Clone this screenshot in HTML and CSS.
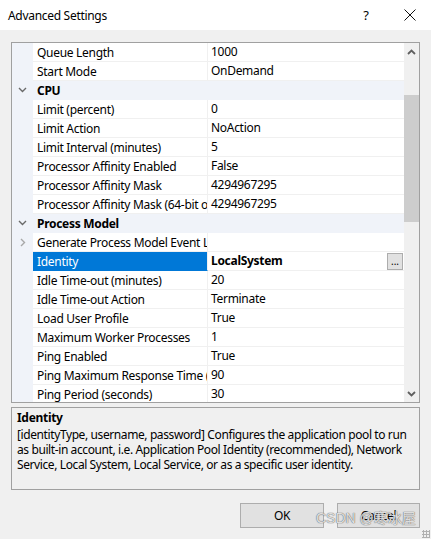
FILE: index.html
```html
<!DOCTYPE html>
<html>
<head>
<meta charset="utf-8">
<link rel="stylesheet" href="styles.css">
</head>
<body>
<div class="dialog">
  <div class="titlebar">
    <span class="title">Advanced Settings</span>
    <span class="help">?</span>
    <span class="close"><svg width="12" height="12" viewBox="0 0 12 12"><path d="M0.5 0.5 L11.5 11.5 M11.5 0.5 L0.5 11.5" stroke="#111" stroke-width="1" fill="none"/></svg></span>
  </div>
  <div class="body">
    <div class="grid">
      <div class="list">
        <div class="row"><div class="gutter"></div><div class="name">Queue Length</div><div class="value">1000</div></div>
        <div class="row"><div class="gutter"></div><div class="name">Start Mode</div><div class="value">OnDemand</div></div>
        <div class="row cat"><div class="gutter"><svg width="9" height="6" viewBox="0 0 9 6"><path d="M1 1 L4.5 4.5 L8 1" stroke="#6a6a6a" stroke-width="1.4" fill="none"/></svg></div><div class="catname">CPU</div></div>
        <div class="row"><div class="gutter"></div><div class="name">Limit (percent)</div><div class="value">0</div></div>
        <div class="row"><div class="gutter"></div><div class="name">Limit Action</div><div class="value">NoAction</div></div>
        <div class="row"><div class="gutter"></div><div class="name">Limit Interval (minutes)</div><div class="value">5</div></div>
        <div class="row"><div class="gutter"></div><div class="name">Processor Affinity Enabled</div><div class="value">False</div></div>
        <div class="row"><div class="gutter"></div><div class="name">Processor Affinity Mask</div><div class="value">4294967295</div></div>
        <div class="row"><div class="gutter"></div><div class="name">Processor Affinity Mask (64-bit option)</div><div class="value">4294967295</div></div>
        <div class="row cat"><div class="gutter"><svg width="9" height="6" viewBox="0 0 9 6"><path d="M1 1 L4.5 4.5 L8 1" stroke="#6a6a6a" stroke-width="1.4" fill="none"/></svg></div><div class="catname">Process Model</div></div>
        <div class="row"><div class="gutter"><svg width="6" height="9" viewBox="0 0 6 9"><path d="M1 1 L4.5 4.5 L1 8" stroke="#a8a8a8" stroke-width="1.4" fill="none"/></svg></div><div class="name">Generate Process Model Event Log Entry</div><div class="value"></div></div>
        <div class="row selected"><div class="gutter"></div><div class="name">Identity</div><div class="value"><b>LocalSystem</b><span class="dots">...</span></div></div>
        <div class="row"><div class="gutter"></div><div class="name">Idle Time-out (minutes)</div><div class="value">20</div></div>
        <div class="row"><div class="gutter"></div><div class="name">Idle Time-out Action</div><div class="value">Terminate</div></div>
        <div class="row"><div class="gutter"></div><div class="name">Load User Profile</div><div class="value">True</div></div>
        <div class="row"><div class="gutter"></div><div class="name">Maximum Worker Processes</div><div class="value">1</div></div>
        <div class="row"><div class="gutter"></div><div class="name">Ping Enabled</div><div class="value">True</div></div>
        <div class="row"><div class="gutter"></div><div class="name">Ping Maximum Response Time (seconds)</div><div class="value">90</div></div>
        <div class="row"><div class="gutter"></div><div class="name">Ping Period (seconds)</div><div class="value">30</div></div>
      </div>
      <div class="scrollbar">
        <div class="arrow"><svg width="9" height="6" viewBox="0 0 9 6"><path d="M1 5 L4.5 1.5 L8 5" stroke="#606060" stroke-width="1.8" fill="none"/></svg></div>
        <div class="track-top"></div>
        <div class="thumb"></div>
        <div class="track-rest"></div>
        <div class="arrow"><svg width="9" height="6" viewBox="0 0 9 6"><path d="M1 1 L4.5 4.5 L8 1" stroke="#606060" stroke-width="1.8" fill="none"/></svg></div>
      </div>
    </div>
    <div class="desc">
      <div class="desc-title">Identity</div>
      <div class="desc-text">[identityType, username, password] Configures the application pool to run as built-in account, i.e. Application Pool Identity (recommended), Network Service, Local System, Local Service, or as a specific user identity.</div>
    </div>
    <div class="buttons">
      <button class="btn ok">OK</button>
      <button class="btn cancel">Cancel</button>
    </div>
  </div>
  <div class="watermark">CSDN @寒冰屋</div>
  <div class="grip"></div>
</div>
</body>
</html>
```
FILE: styles.css
```css
html, body {
  margin: 0;
  padding: 0;
}
body {
  width: 431px;
  height: 539px;
  background: #f0f0f0;
  font-family: "Noto Sans", "Open Sans", sans-serif;
  font-size: 12px;
  letter-spacing: -0.3px;
  color: #000;
  overflow: hidden;
}
.dialog {
  position: relative;
  width: 431px;
  height: 539px;
}
.titlebar {
  height: 30px;
  background: #fff;
  display: flex;
  align-items: center;
}
.title {
  padding-left: 8px;
  flex: 1;
  font-size: 12px;
}
.help {
  width: 16px;
  text-align: center;
  margin-right: 30px;
  font-size: 13px;
}
.close {
  display: flex;
  margin-right: 15px;
}
.body {
  padding: 12px 11px 0 11px;
}
.grid {
  width: 407px;
  height: 359px;
  border: 1px solid #a0a0a0;
  display: flex;
  background: #fff;
}
.list {
  width: 392px;
  overflow: hidden;
}
.row {
  display: flex;
  height: 19px;
  line-height: 20px;
}
.gutter {
  width: 21px;
  flex: none;
  background: #f0f3f9;
  display: flex;
  align-items: center;
  justify-content: center;
  padding-bottom: 1px;
  box-sizing: border-box;
}
.name {
  flex: none;
  box-sizing: content-box;
  padding-left: 4px;
  width: 170px;
  height: 18px;
  border-right: 1px solid #f0f0f0;
  border-bottom: 1px solid #f0f0f0;
  white-space: nowrap;
  overflow: hidden;
}
.value {
  flex: 1;
  padding-left: 3px;
  height: 18px;
  border-bottom: 1px solid #f0f0f0;
  white-space: nowrap;
  overflow: hidden;
  display: flex;
  align-items: center;
}
.value b {
  flex: 1;
  line-height: 20px;
}
.cat {
  background: #f0f3f9;
}
.catname {
  flex: 1;
  padding-left: 4px;
  font-weight: bold;
}
.selected .name {
  background: #0078d7;
  color: #fff;
  border-bottom-color: #0078d7;
}
.dots {
  width: 14px;
  height: 15px;
  border: 1px solid #adadad;
  background: #e1e1e1;
  line-height: 15px;
  text-align: center;
  font-size: 10px;
  letter-spacing: 0;
  margin-right: 1px;
  box-sizing: content-box;
}
.scrollbar {
  width: 15px;
  background: #f0f0f0;
  display: flex;
  flex-direction: column;
}
.arrow {
  height: 17px;
  display: flex;
  align-items: center;
  justify-content: center;
}
.track-top {
  height: 35px;
}
.thumb {
  height: 127px;
  background: #cdcdcd;
}
.track-rest {
  flex: 1;
}
.desc {
  margin-top: 4px;
  height: 81px;
  border: 1px solid #a0a0a0;
  padding: 0 0 0 5px;
  box-sizing: content-box;
  width: 402px;
}
.desc-title {
  font-weight: bold;
  line-height: 18px;
  margin-top: 1px;
}
.desc-text {
  line-height: 15px;
  letter-spacing: -0.4px;
}
.buttons {
  margin-top: 13px;
  display: flex;
  justify-content: flex-end;
  gap: 13px;
}
.btn {
  height: 25px;
  border: 1px solid #adadad;
  background: #e1e1e1;
  font-family: inherit;
  font-size: 12px;
  letter-spacing: -0.3px;
  color: #000;
  padding: 0;
}
.ok {
  width: 84px;
}
.cancel {
  width: 83px;
}
.watermark {
  position: absolute;
  left: 316px;
  top: 510px;
  font-size: 14px;
  line-height: 17px;
  color: rgba(255, 255, 255, 0.8);
  text-shadow: 0 0 1px #666, 0 0 1px #666;
  font-family: "Liberation Sans", "Noto Sans CJK SC", sans-serif;
  letter-spacing: 0;
  white-space: nowrap;
}
.grip {
  position: absolute;
  right: 1px;
  bottom: 1px;
  width: 8px;
  height: 8px;
  background-image: radial-gradient(circle, #b0b0b0 1px, transparent 1.2px);
  background-size: 3px 3px;
}
```
